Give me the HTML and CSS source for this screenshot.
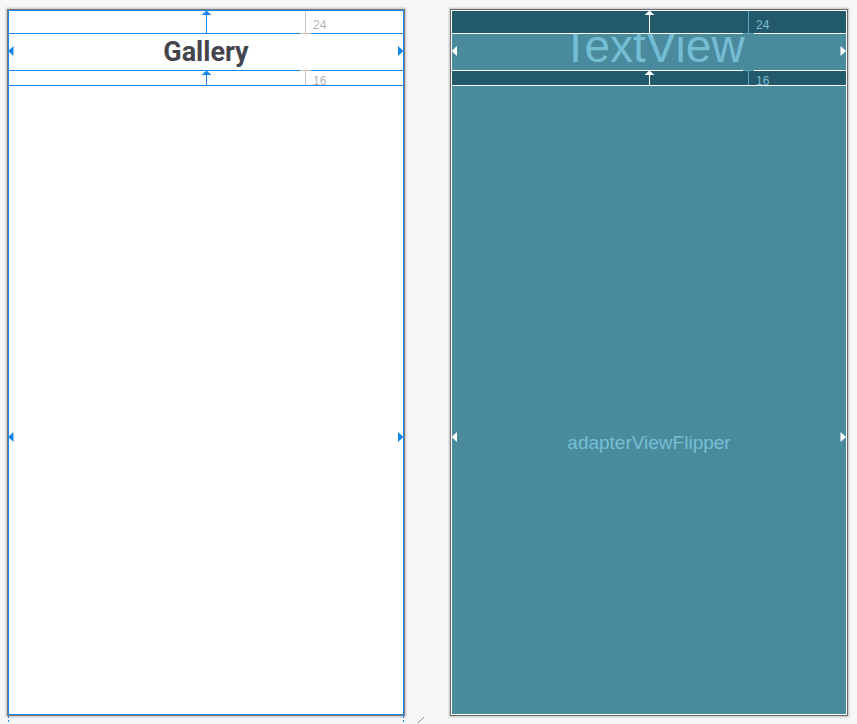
FILE: index.html
```html
<!DOCTYPE html>
<html>
<head>
<meta charset="utf-8">
<link rel="stylesheet" href="styles.css">
</head>
<body>
<div class="stage">
  <div class="screen design">
    <div class="margin-area top"></div>
    <div class="textview"><span class="tv-label">Gallery</span></div>
    <div class="margin-area bottom"></div>
    <div class="flipper"></div>
    <svg class="overlay" width="396" height="705" viewBox="0 0 396 705">
      <g stroke="#1a86ef" fill="#1a86ef">
        <line x1="198.5" y1="23" x2="198.5" y2="4" stroke-width="1"/>
        <polygon points="193.5,5 198.5,0.5 203.5,5" stroke="none"/>
        <line x1="198.5" y1="75" x2="198.5" y2="64" stroke-width="1"/>
        <polygon points="193.5,65 198.5,60.5 203.5,65" stroke="none"/>
        <polygon points="0,41 5.5,36 5.5,46" stroke="none"/>
        <polygon points="395.5,41 390,36 390,46" stroke="none"/>
        <polygon points="0,427 5.5,422 5.5,432" stroke="none"/>
        <polygon points="395.5,427 390,422 390,432" stroke="none"/>
        <line x1="0.5" y1="706" x2="0.5" y2="716" stroke-dasharray="2 2" stroke-width="1"/>
        <line x1="395.5" y1="706" x2="395.5" y2="716" stroke-dasharray="2 2" stroke-width="1"/>
      </g>
      <g stroke="#c4c4c4" fill="none" stroke-width="1">
        <line x1="297.5" y1="1" x2="297.5" y2="23"/>
        <line x1="292" y1="23.5" x2="303" y2="23.5"/>
        <line x1="297.5" y1="60" x2="297.5" y2="75"/>
        <line x1="292" y1="60.5" x2="303" y2="60.5"/>
      </g>
      <text x="305" y="19" class="dim">24</text>
      <text x="305" y="75" class="dim">16</text>
      <line x1="410" y1="713" x2="416" y2="707" stroke="#8a8a8a" stroke-width="1"/>
    </svg>
  </div>
  <div class="screen blueprint">
    <div class="margin-area top"></div>
    <div class="textview"><span class="bp-label">TextView</span></div>
    <div class="margin-area bottom"></div>
    <div class="flipper"><span class="flip-label">adapterViewFlipper</span></div>
    <svg class="overlay" width="396" height="705" viewBox="0 0 396 705">
      <g stroke="#ffffff" fill="#ffffff">
        <line x1="198.5" y1="23" x2="198.5" y2="4" stroke-width="1"/>
        <polygon points="193.5,5 198.5,0.5 203.5,5" stroke="none"/>
        <line x1="198.5" y1="75" x2="198.5" y2="64" stroke-width="1"/>
        <polygon points="193.5,65 198.5,60.5 203.5,65" stroke="none"/>
        <polygon points="0.5,41 6,36 6,46" stroke="none"/>
        <polygon points="395,41 389.5,36 389.5,46" stroke="none"/>
        <polygon points="0.5,427 6,422 6,432" stroke="none"/>
        <polygon points="395,427 389.5,422 389.5,432" stroke="none"/>
      </g>
      <g stroke="#5ea6be" fill="none" stroke-width="1">
        <line x1="297.5" y1="1" x2="297.5" y2="23"/>
        <line x1="292" y1="23.5" x2="303" y2="23.5"/>
        <line x1="297.5" y1="60" x2="297.5" y2="75"/>
        <line x1="292" y1="60.5" x2="303" y2="60.5"/>
      </g>
      <text x="305" y="19" class="dim bp">24</text>
      <text x="305" y="75" class="dim bp">16</text>
    </svg>
  </div>
</div>
</body>
</html>
```

FILE: styles.css
```css
html, body {
  margin: 0;
  padding: 0;
  background: #f5f6f8;
  width: 857px;
  height: 724px;
  overflow: hidden;
}

.stage {
  display: flex;
  gap: 47px;
  padding: 10px 0 0 8px;
  align-items: flex-start;
}

.screen {
  position: relative;
  width: 396px;
  height: 705px;
  box-sizing: border-box;
  display: flex;
  flex-direction: column;
}

.design {
  background: #ffffff;
  border: 1px solid #1a86ef;
  box-shadow: 0 0 0 1px #7a7a7a, 0 0 2px 2px rgba(0, 0, 0, 0.22);
}

.blueprint {
  background: #4a8a9d;
  border: 1px solid #ffffff;
  box-shadow: 0 0 0 1px #6a6a6a, 0 0 2px 2px rgba(0, 0, 0, 0.22);
}

.margin-area.top {
  height: 22px;
  flex: none;
}

.margin-area.bottom {
  height: 14px;
  flex: none;
}

.blueprint .margin-area {
  background: #235a6b;
}

.textview {
  height: 36px;
  flex: none;
  overflow: hidden;
  display: flex;
  justify-content: center;
  align-items: flex-start;
}

.design .textview {
  border-top: 1px solid #1a86ef;
  border-bottom: 1px solid #1a86ef;
}

.blueprint .textview {
  border-top: 1px solid #ffffff;
  border-bottom: 1px solid #ffffff;
}

.tv-label {
  font-family: Roboto, "Liberation Sans", sans-serif;
  font-weight: 700;
  font-size: 27px;
  line-height: 36px;
  color: #44444c;
}

.bp-label {
  font-family: "Liberation Sans", Arial, sans-serif;
  font-size: 46px;
  line-height: 25px;
  color: #74bdd2;
  margin-left: 8px;
  white-space: nowrap;
}

.flipper {
  flex: 1;
  display: flex;
  justify-content: center;
  align-items: flex-start;
}

.design .flipper {
  border-top: 1px solid #1a86ef;
}

.blueprint .flipper {
  border-top: 1px solid #ffffff;
}

.flip-label {
  font-family: "Liberation Sans", Arial, sans-serif;
  font-size: 19px;
  line-height: 22px;
  color: #76bfd4;
  margin-top: 346px;
}

.overlay {
  position: absolute;
  left: -1px;
  top: -1px;
  overflow: visible;
  pointer-events: none;
}

.dim {
  font-family: "Liberation Sans", Arial, sans-serif;
  font-size: 12px;
  fill: #b4b4b4;
}

.dim.bp {
  fill: #7bbdd2;
}
```
